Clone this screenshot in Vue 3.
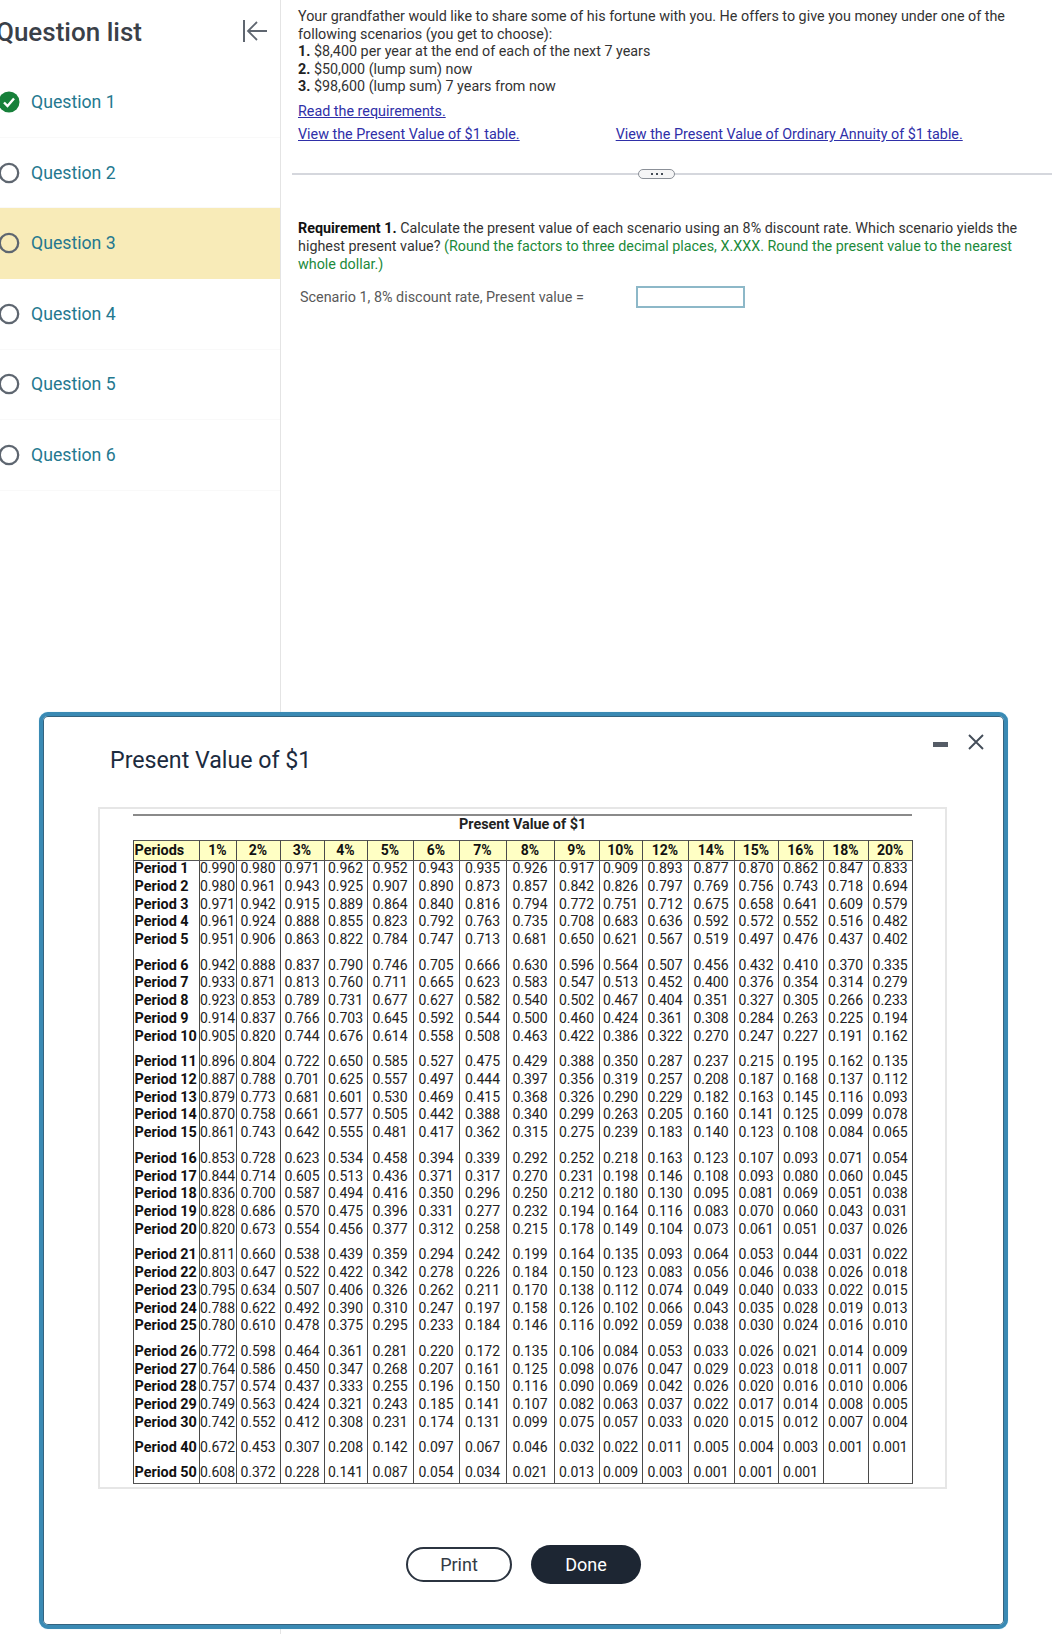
<script setup>
const questions = [1, 2, 3, 4, 5, 6].map((n) => ({ n, done: n === 1, active: n === 3 }))
const rates = ['1%', '2%', '3%', '4%', '5%', '6%', '7%', '8%', '9%', '10%', '12%', '14%', '15%', '16%', '18%', '20%']
const widths = [66, 37, 44, 44, 43, 46, 46, 47, 48, 45, 43, 46, 46, 44, 45, 45, 44]
const raw = `1 .990 .980 .971 .962 .952 .943 .935 .926 .917 .909 .893 .877 .870 .862 .847 .833
2 .980 .961 .943 .925 .907 .890 .873 .857 .842 .826 .797 .769 .756 .743 .718 .694
3 .971 .942 .915 .889 .864 .840 .816 .794 .772 .751 .712 .675 .658 .641 .609 .579
4 .961 .924 .888 .855 .823 .792 .763 .735 .708 .683 .636 .592 .572 .552 .516 .482
5 .951 .906 .863 .822 .784 .747 .713 .681 .650 .621 .567 .519 .497 .476 .437 .402
6 .942 .888 .837 .790 .746 .705 .666 .630 .596 .564 .507 .456 .432 .410 .370 .335
7 .933 .871 .813 .760 .711 .665 .623 .583 .547 .513 .452 .400 .376 .354 .314 .279
8 .923 .853 .789 .731 .677 .627 .582 .540 .502 .467 .404 .351 .327 .305 .266 .233
9 .914 .837 .766 .703 .645 .592 .544 .500 .460 .424 .361 .308 .284 .263 .225 .194
10 .905 .820 .744 .676 .614 .558 .508 .463 .422 .386 .322 .270 .247 .227 .191 .162
11 .896 .804 .722 .650 .585 .527 .475 .429 .388 .350 .287 .237 .215 .195 .162 .135
12 .887 .788 .701 .625 .557 .497 .444 .397 .356 .319 .257 .208 .187 .168 .137 .112
13 .879 .773 .681 .601 .530 .469 .415 .368 .326 .290 .229 .182 .163 .145 .116 .093
14 .870 .758 .661 .577 .505 .442 .388 .340 .299 .263 .205 .160 .141 .125 .099 .078
15 .861 .743 .642 .555 .481 .417 .362 .315 .275 .239 .183 .140 .123 .108 .084 .065
16 .853 .728 .623 .534 .458 .394 .339 .292 .252 .218 .163 .123 .107 .093 .071 .054
17 .844 .714 .605 .513 .436 .371 .317 .270 .231 .198 .146 .108 .093 .080 .060 .045
18 .836 .700 .587 .494 .416 .350 .296 .250 .212 .180 .130 .095 .081 .069 .051 .038
19 .828 .686 .570 .475 .396 .331 .277 .232 .194 .164 .116 .083 .070 .060 .043 .031
20 .820 .673 .554 .456 .377 .312 .258 .215 .178 .149 .104 .073 .061 .051 .037 .026
21 .811 .660 .538 .439 .359 .294 .242 .199 .164 .135 .093 .064 .053 .044 .031 .022
22 .803 .647 .522 .422 .342 .278 .226 .184 .150 .123 .083 .056 .046 .038 .026 .018
23 .795 .634 .507 .406 .326 .262 .211 .170 .138 .112 .074 .049 .040 .033 .022 .015
24 .788 .622 .492 .390 .310 .247 .197 .158 .126 .102 .066 .043 .035 .028 .019 .013
25 .780 .610 .478 .375 .295 .233 .184 .146 .116 .092 .059 .038 .030 .024 .016 .010
26 .772 .598 .464 .361 .281 .220 .172 .135 .106 .084 .053 .033 .026 .021 .014 .009
27 .764 .586 .450 .347 .268 .207 .161 .125 .098 .076 .047 .029 .023 .018 .011 .007
28 .757 .574 .437 .333 .255 .196 .150 .116 .090 .069 .042 .026 .020 .016 .010 .006
29 .749 .563 .424 .321 .243 .185 .141 .107 .082 .063 .037 .022 .017 .014 .008 .005
30 .742 .552 .412 .308 .231 .174 .131 .099 .075 .057 .033 .020 .015 .012 .007 .004
40 .672 .453 .307 .208 .142 .097 .067 .046 .032 .022 .011 .005 .004 .003 .001 .001
50 .608 .372 .228 .141 .087 .054 .034 .021 .013 .009 .003 .001 .001 .001`
const rows = raw.split('\n').map((line) => {
  const [p, ...vals] = line.split(' ')
  const n = Number(p)
  const cells = vals.map((v) => '0' + v)
  while (cells.length < 16) cells.push('')
  return { n, cells, gap: n > 5 && n <= 30 && n % 5 === 1, far: n === 40 || n === 50 }
})
</script>

<template>
  <div class="page">
    <aside class="sidebar">
      <header class="side-head">
        <h2>Question list</h2>
        <svg class="collapse" width="26" height="26" viewBox="0 0 26 26" fill="none" stroke="#5f6670" stroke-width="1.8">
          <path d="M2 2v22" stroke-width="2" />
          <path d="M25 13H7M15 4l-9 9 9 9" />
        </svg>
      </header>
      <ul class="qlist">
        <li v-for="q in questions" :key="q.n" class="qitem" :class="{ active: q.active }">
          <svg v-if="q.done" class="mark" width="22" height="22" viewBox="0 0 22 22">
            <circle cx="11" cy="11" r="10.5" fill="#17803a" />
            <path d="M6 11.5l3.5 3.5 6.5-7.5" fill="none" stroke="#fff" stroke-width="2.4" />
          </svg>
          <svg v-else class="mark" width="22" height="22" viewBox="0 0 22 22">
            <circle cx="11" cy="11" r="9.2" fill="none" stroke="#5e6670" stroke-width="2.3" />
          </svg>
          <span>Question {{ q.n }}</span>
        </li>
      </ul>
    </aside>

    <main class="main">
      <p class="intro">
        Your grandfather would like to share some of his fortune with you. He offers to give you money under one of the<br />
        following scenarios (you get to choose):<br />
        <b>1.</b> $8,400 per year at the end of each of the next 7 years<br />
        <b>2.</b> $50,000 (lump sum) now<br />
        <b>3.</b> $98,600 (lump sum) 7 years from now
      </p>
      <a class="link solo">Read the requirements.</a>
      <div class="link-row">
        <a class="link">View the Present Value of $1 table.</a>
        <a class="link">View the Present Value of Ordinary Annuity of $1 table.</a>
      </div>
      <div class="divider">
        <span class="pill"><i></i><i></i><i></i></span>
      </div>
      <p class="req">
        <b>Requirement 1.</b> Calculate the present value of each scenario using an 8% discount rate. Which scenario yields the<br />
        highest present value? <span class="green">(Round the factors to three decimal places, X.XXX. Round the present value to the nearest<br />
        whole dollar.)</span>
      </p>
      <div class="answer">
        <span class="answer-label">Scenario 1, 8% discount rate, Present value =</span>
        <span class="answer-box"></span>
      </div>
    </main>

    <section class="dialog">
      <div class="dialog-head">
        <h1>Present Value of $1</h1>
        <div class="win-btns">
          <span class="min"></span>
          <svg width="18" height="18" viewBox="0 0 18 18" stroke="#444d59" stroke-width="1.9" fill="none">
            <path d="M2 2l14 14M16 2L2 16" />
          </svg>
        </div>
      </div>
      <div class="sheet">
        <table class="pv">
          <colgroup>
            <col v-for="(w, i) in widths" :key="i" :style="{ width: w + 'px' }" />
          </colgroup>
          <thead>
            <tr class="caption-row">
              <th colspan="17">Present Value of $1</th>
            </tr>
            <tr class="head-row">
              <th class="first">Periods</th>
              <th v-for="r in rates" :key="r">{{ r }}</th>
            </tr>
          </thead>
          <tbody>
            <tr v-for="row in rows" :key="row.n" :class="{ gap: row.gap, far: row.far, f50: row.n === 50 }">
              <th class="first">Period {{ row.n }}</th>
              <td v-for="(c, i) in row.cells" :key="i">{{ c }}</td>
            </tr>
          </tbody>
        </table>
      </div>
      <div class="actions">
        <button class="btn outline">Print</button>
        <button class="btn solid">Done</button>
      </div>
    </section>
  </div>
</template>

<style scoped>
.page {
  position: relative;
  display: flex;
  width: 1063px;
  height: 1634px;
  overflow: hidden;
  background: #fff;
  font-family: Roboto, "Liberation Sans", sans-serif;
  color: #333;
}
.sidebar {
  flex: 0 0 281px;
  box-sizing: border-box;
  border-right: 1px solid #e4e4e4;
}
.side-head {
  display: flex;
  align-items: center;
  justify-content: space-between;
  height: 67.3px;
  padding: 0 12px 3px 0;
  box-sizing: border-box;
}
.side-head h2 {
  margin: 0 0 0 -4px;
  font-size: 26px;
  font-weight: 500;
  color: #3a4048;
}
.collapse {
  margin-top: -3px;
}
.qlist {
  list-style: none;
  margin: 0;
  padding: 0;
}
.qitem {
  display: flex;
  align-items: center;
  gap: 11px;
  height: 70.6px;
  margin-left: -2px;
  border-bottom: 1px solid #f9f9f9;
  box-sizing: border-box;
  font-size: 17.7px;
  color: #24788f;
}
.qitem.active {
  background: #f8ebb8;
  border-bottom-color: #f8ebb8;
}
.mark {
  flex: none;
}
.main {
  flex: 1;
  min-width: 0;
  padding-top: 8px;
}
.intro,
.req {
  margin: 0 0 0 17px;
  font-size: 14.34px;
  line-height: 17.85px;
  white-space: nowrap;
}
.intro {
  line-height: 17.6px;
}
.intro b {
  color: #222;
}
.link {
  color: #2f2fa8;
  text-decoration: underline;
  font-size: 14.34px;
  line-height: 18px;
}
.solo {
  display: block;
  margin: 7px 0 0 17px;
}
.link-row {
  display: flex;
  gap: 96px;
  margin: 5px 0 0 17px;
}
.divider {
  position: relative;
  height: 2px;
  margin: 29px 11px 0 11px;
  background: #d5d7dd;
}
.pill {
  position: absolute;
  left: 346px;
  top: -4px;
  display: flex;
  align-items: center;
  justify-content: center;
  gap: 3px;
  width: 37px;
  height: 10px;
  box-sizing: border-box;
  border: 1.5px solid #8b9098;
  border-radius: 6px;
  background: #f5f5f6;
}
.pill i {
  width: 2px;
  height: 2px;
  background: #444b55;
}
.req {
  margin-top: 45px;
}
.req b {
  color: #111;
}
.green {
  color: #1c8a3b;
}
.answer {
  display: flex;
  align-items: flex-start;
  margin: 12px 0 0 19px;
}
.answer-label {
  width: 336px;
  padding-top: 3px;
  font-size: 14.37px;
  color: #595959;
}
.answer-box {
  width: 109px;
  height: 22px;
  box-sizing: border-box;
  border: 2px solid #8db8c8;
}
.dialog {
  position: absolute;
  left: 39px;
  top: 712px;
  width: 969px;
  height: 917px;
  box-sizing: border-box;
  border: 4px solid #3a8ab4;
  border-radius: 9px;
  background: #fff;
  box-shadow: inset 0 0 0 1px #34637f, 0 0 1px #8fd0ea;
}
.dialog-head {
  display: flex;
  justify-content: space-between;
  height: 91px;
  padding: 17px 19px 0 67px;
  box-sizing: border-box;
}
.dialog-head h1 {
  margin: 0;
  font-size: 23.2px;
  font-weight: 400;
  line-height: 54px;
  color: #1c2b3e;
}
.win-btns {
  display: flex;
  align-items: center;
  gap: 19px;
  height: 18px;
}
.min {
  width: 15px;
  height: 5px;
  background: #555c66;
  margin-top: 5px;
}
.sheet {
  box-sizing: border-box;
  width: 849px;
  height: 682px;
  margin-left: 55px;
  padding: 5px 0 0 33px;
  border: 2px solid #e6e6e6;
}
.pv {
  table-layout: fixed;
  border-collapse: collapse;
  width: 779px;
  margin-left: -0.5px;
  font-size: 14px;
  color: #222;
}
.pv th,
.pv td {
  padding: 0 0 2px;
  height: 15.75px;
  line-height: 15.75px;
  border-left: 1px solid #4a4a4a;
  border-right: 1px solid #4a4a4a;
  text-align: center;
  font-weight: 400;
  vertical-align: bottom;
  overflow: hidden;
  white-space: nowrap;
}
.pv .first {
  text-align: left;
  padding-left: 1px;
  font-size: 14.4px;
  font-weight: 700;
  color: #111;
}
.pv .caption-row th {
  height: 24px;
  padding: 0;
  border: 0;
  border-top: 2px solid #8a8a8a;
  font-size: 14.4px;
  font-weight: 700;
  line-height: 17px;
  vertical-align: top;
}
.pv .head-row th {
  height: 19px;
  padding: 0;
  background: #ffffc4;
  border-top: 1px solid #555;
  border-bottom: 1px solid #555;
  font-weight: 700;
  color: #111;
  vertical-align: middle;
}
.pv .head-row .first {
  padding-left: 1px;
  font-size: 14.4px;
}
.pv .gap th,
.pv .gap td {
  height: 23.6px;
}
.pv .far th,
.pv .far td {
  height: 23.5px;
}
.pv .f50 th,
.pv .f50 td {
  height: 22.5px;
  border-bottom: 1px solid #555;
}
.actions {
  display: flex;
  justify-content: center;
  align-items: center;
  gap: 19px;
  margin-top: 56px;
  margin-left: 0;
}
.btn {
  font-family: inherit;
  font-size: 18px;
  border-radius: 20px;
  box-sizing: border-box;
}
.outline {
  width: 106px;
  height: 35px;
  background: #fff;
  border: 2px solid #2b3440;
  color: #333b45;
}
.solid {
  width: 110px;
  height: 39px;
  background: #1d2633;
  border: 0;
  color: #fff;
}
</style>
